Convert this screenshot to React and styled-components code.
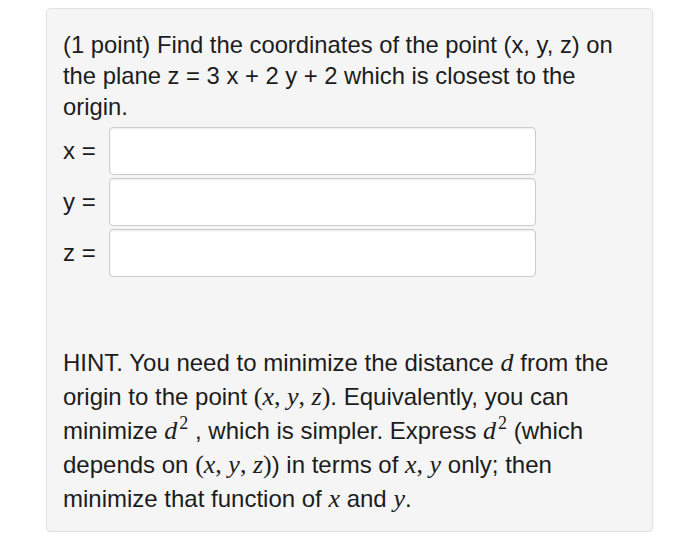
import React from "react";
import styled, { createGlobalStyle } from "styled-components";

const Global = createGlobalStyle`
  html, body { margin: 0; padding: 0; background: #ffffff; }
  body { font-family: "Liberation Sans", Arial, sans-serif; color: #1c1c1c; }
`;

const Page = styled.div`
  padding: 8px 0 0 46px;
`;

const Card = styled.div`
  width: 607px;
  box-sizing: border-box;
  background: #f5f5f5;
  border: 1px solid #e2e2e2;
  border-radius: 5px;
  box-shadow: 0 1px 2px rgba(0, 0, 0, 0.08);
  padding: 20px 16px 15px 16px;
`;

const Para = styled.p`
  margin: 0;
  font-size: 23.8px;
  line-height: 31px;
`;

const Hint = styled(Para)`
  margin-top: 69px;
  font-size: 24px;
  line-height: 34px;
`;

const Rows = styled.div`
  display: flex;
  flex-direction: column;
  gap: 3px;
  margin-top: 5px;
`;

const Row = styled.div`
  display: flex;
  align-items: center;
`;

const Label = styled.span`
  width: 46px;
  font-size: 24px;
`;

const Input = styled.input`
  width: 427px;
  height: 48px;
  box-sizing: border-box;
  border: 1px solid #cccccc;
  border-radius: 4px;
  background: #ffffff;
  box-shadow: inset 0 1px 2px rgba(0, 0, 0, 0.08);
  padding: 4px 8px;
  font-size: 18px;
  outline: none;
`;

const M = styled.span`
  font-family: "Liberation Serif", "Times New Roman", serif;
  font-style: italic;
  font-size: 26px;
  line-height: 1;
`;

const MUp = styled.span`
  font-family: "Liberation Serif", "Times New Roman", serif;
  font-size: 26px;
  line-height: 1;
`;

const Sup = styled.sup`
  font-family: "Liberation Serif", "Times New Roman", serif;
  font-size: 18px;
  font-style: normal;
  line-height: 0;
  vertical-align: 10px;
  margin-left: 2px;
`;

const fields = ["x", "y", "z"];

export default function App() {
  return (
    <>
      <Global />
      <Page>
        <Card>
          <Para>
            (1 point) Find the coordinates of the point (x, y, z) on the plane z = 3 x + 2 y + 2 which is closest to the origin.
          </Para>
          <Rows>
            {fields.map((f) => (
              <Row key={f}>
                <Label>{f} =</Label>
                <Input type="text" aria-label={f} />
              </Row>
            ))}
          </Rows>
          <Hint>
            HINT. You need to minimize the distance <M>d</M> from the origin to the point{" "}
            <MUp>(</MUp><M>x</M><MUp>, </MUp><M>y</M><MUp>, </MUp><M>z</M><MUp>)</MUp>. Equivalently, you can minimize{" "}
            <M>d</M><Sup>2</Sup> , which is simpler. Express <M>d</M><Sup>2</Sup> (which depends on{" "}
            <MUp>(</MUp><M>x</M><MUp>, </MUp><M>y</M><MUp>, </MUp><M>z</M><MUp>)</MUp>) in terms of <M>x</M><MUp>, </MUp><M>y</M> only; then minimize that function of <M>x</M> and <M>y</M>.
          </Hint>
        </Card>
      </Page>
    </>
  );
}
